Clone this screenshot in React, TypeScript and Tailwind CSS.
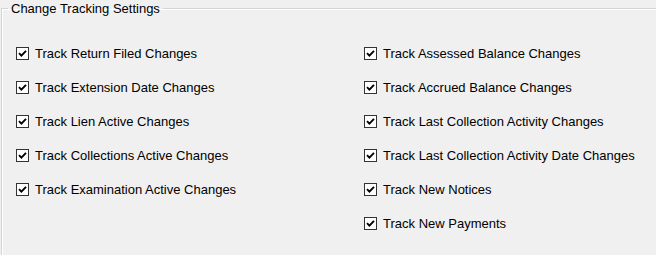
import * as React from 'react';

const LEFT = [
  'Track Return Filed Changes',
  'Track Extension Date Changes',
  'Track Lien Active Changes',
  'Track Collections Active Changes',
  'Track Examination Active Changes',
];

const RIGHT = [
  'Track Assessed Balance Changes',
  'Track Accrued Balance Changes',
  'Track Last Collection Activity Changes',
  'Track Last Collection Activity Date Changes',
  'Track New Notices',
  'Track New Payments',
];

function CheckItem({ label }: { label: string }): React.JSX.Element {
  const [on, setOn] = React.useState(true);
  return (
    <label className="flex h-[34px] cursor-default items-center gap-[6px]" onClick={() => setOn(!on)}>
      <span className="grid size-[13px] shrink-0 place-items-center border border-[#333333] bg-white">
        {on && (
          <svg width="9" height="9" viewBox="0 0 9 9" aria-hidden>
            <path d="M1 4.2 L3.4 6.6 L8 1.8" fill="none" stroke="#000" strokeWidth="1.9" />
          </svg>
        )}
      </span>
      <span className="text-[13px] leading-none text-black">{label}</span>
    </label>
  );
}

export default function App(): React.JSX.Element {
  return (
    <div className="h-[255px] w-[656px] overflow-hidden bg-[#f0f0f0] font-['Liberation_Sans',Arial,sans-serif]">
      <fieldset className="ml-[1px] h-[260px] border-l border-t border-[#d5d5d5] pl-[14px] shadow-[inset_1px_1px_0_#ffffff]">
        <legend className="-ml-[8px] px-[3px] text-[13px] leading-[17px] text-black">Change Tracking Settings</legend>
        <div className="mt-[19px] grid grid-cols-[348px_1fr]">
          <div className="flex flex-col">
            {LEFT.map((l) => (
              <CheckItem key={l} label={l} />
            ))}
          </div>
          <div className="flex flex-col">
            {RIGHT.map((l) => (
              <CheckItem key={l} label={l} />
            ))}
          </div>
        </div>
      </fieldset>
    </div>
  );
}
